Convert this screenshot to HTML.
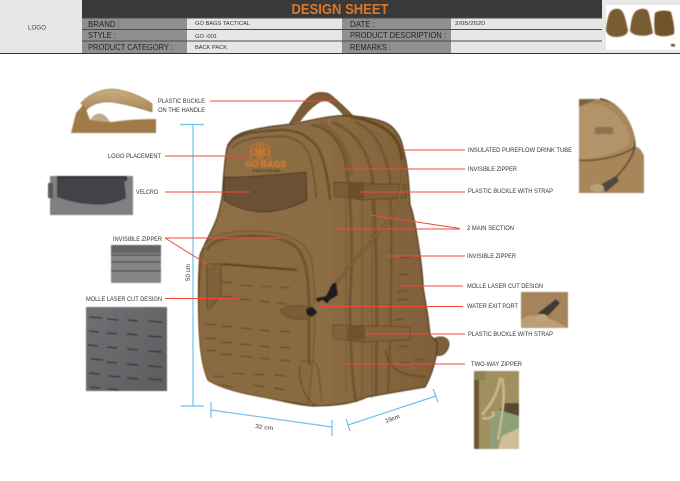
<!DOCTYPE html>
<html><head><meta charset="utf-8"><style>
html,body{margin:0;padding:0;background:#fff}
svg{display:block}
text{font-family:"Liberation Sans",sans-serif}
.l{font-size:6.2px;fill:#333}
.h{font-size:8.2px;fill:#222}
.s{font-size:5.8px;fill:#333}
.v{font-size:6px;fill:#333}
</style></head><body>
<svg width="680" height="481" viewBox="0 0 680 481" xmlns="http://www.w3.org/2000/svg">
<defs>
<linearGradient id="g" x1="0" x2="1" y1="0" y2="0"><stop offset="0" stop-color="#8f6f45"/><stop offset=".55" stop-color="#8c6c43"/><stop offset="1" stop-color="#7f603a"/></linearGradient>
<linearGradient id="hg" x1="0" x2="0" y1="0" y2="1"><stop offset="0" stop-color="#c9ad80"/><stop offset="1" stop-color="#a98758"/></linearGradient>
<linearGradient id="dg" x1="0" x2="1" y1="0" y2="1"><stop offset="0" stop-color="#717174"/><stop offset="1" stop-color="#5d5d60"/></linearGradient>
<filter id="b" x="-5%" y="-5%" width="110%" height="110%"><feGaussianBlur stdDeviation=".55"/></filter>
</defs>
<rect width="680" height="481" fill="#fff"/>
<!-- header -->
<rect x="0" y="0" width="82" height="53" fill="#e6e6e5"/>
<rect x="82" y="0" width="520" height="18" fill="#3a3939"/>
<rect x="82" y="18" width="105" height="35" fill="#8f8f8e"/>
<rect x="187" y="18" width="155" height="35" fill="#e6e6e5"/>
<rect x="342" y="18" width="109" height="35" fill="#8f8f8e"/>
<rect x="451" y="18" width="151" height="35" fill="#e6e6e5"/>
<path d="M82 18H602M82 29.500H602M82 41H602" stroke="#4a4a4a" stroke-width="1"/>
<rect x="0" y="53" width="680" height="1" fill="#333"/>
<rect x="602" y="0" width="78" height="53" fill="#e8e8e7"/>
<rect x="606" y="5" width="74" height="45" fill="#fff"/>
<text x="28" y="29.500" font-size="6.500" fill="#444" textLength="18" lengthAdjust="spacingAndGlyphs">LOGO</text>
<text x="291.500" y="14" font-size="15" font-weight="bold" fill="#d9782b" textLength="97" lengthAdjust="spacingAndGlyphs">DESIGN SHEET</text>
<text class="h" x="88" y="27" textLength="32" lengthAdjust="spacingAndGlyphs">BRAND :</text>
<text class="h" x="88" y="38" textLength="28" lengthAdjust="spacingAndGlyphs">STYLE :</text>
<text class="h" x="88" y="50" textLength="85" lengthAdjust="spacingAndGlyphs">PRODUCT CATEGORY :</text>
<text class="h" x="350" y="27" textLength="25" lengthAdjust="spacingAndGlyphs">DATE :</text>
<text class="h" x="350" y="38" textLength="96" lengthAdjust="spacingAndGlyphs">PRODUCT DESCRIPTION :</text>
<text class="h" x="350" y="50" textLength="41" lengthAdjust="spacingAndGlyphs">REMARKS :</text>
<text class="s" x="195" y="25" textLength="55" lengthAdjust="spacingAndGlyphs">GO BAGS TACTICAL</text>
<text class="s" x="195" y="38" textLength="22" lengthAdjust="spacingAndGlyphs">GO -001</text>
<text class="s" x="195" y="49" textLength="32" lengthAdjust="spacingAndGlyphs">BACK PACK</text>
<text class="s" x="455" y="25" textLength="30" lengthAdjust="spacingAndGlyphs">2/05/2020</text>
<!-- thumbnail bags -->
<g filter="url(#b)">
<path d="M606 29C607 22 608 14 611 11C614 8 620 8 622 11C625 15 626 22 628 30C628 35 622 37 616 37C610 37 606 34 606 29Z" fill="#7a5c32"/>
<path d="M630 31C631 22 632 14 636 11C640 8 646 8 648 11C650 16 651 24 653 33C648 37 634 37 630 31Z" fill="#7a5c32"/>
<path d="M655 13C658 10 668 10 671 12C673 20 675 28 674 34C668 37 658 37 655 34C654 28 654 20 655 13Z" fill="#6f5229"/>
<rect x="671" y="44" width="4" height="2.500" fill="#6a4d28"/>
</g>
<!-- backpack -->
<g filter="url(#b)">
<path d="M290 123C298 110 306 96 316 93C322 92 328 92 332 96C340 103 348 110 353 116L346 118C340 110 332 102 325 100C318 101 308 110 300 121Z" fill="#7d5d36" stroke="#50381a" stroke-width=".8"/>
<!-- side strap flap -->
<path d="M430 342C434 337 442 335 447 339C451 343 449 349 444 354C438 358 432 354 430 348Z" fill="#7d5f38" stroke="#503a1c" stroke-width=".7"/>
<path d="M227 148C232 133 246 129 292 124C310 121 332 114 353 116C375 118 388 122 393 128C400 135 402 142 403 148C408 165 409 185 410 205C414 215 417 235 420 255C422 270 423 278 423 287L428 317L430 335L437 342C438 355 432 375 425 387L367 397C355 403 335 406 313 406C295 405 280 400 263 397C240 393 220 388 208 380C203 368 201 355 200 343C198 320 198 275 200 255C205 242 213 230 217 218C221 205 223 195 223 185C224 170 225 158 227 148Z" fill="url(#g)" stroke="#4d3617" stroke-width="1.200"/>
<!-- top front pocket arcs -->
<path d="M228 146C234 135 248 131 285 130C302 131 314 140 320 152C326 168 329 185 330 200" fill="none" stroke="#5f4623" stroke-width="2.500" opacity=".75"/>
<path d="M232 148C240 139 255 137 282 136C296 137 306 145 310 157C313 170 315 180 316 198" fill="none" stroke="#674c27" stroke-width="2" opacity=".65"/>
<!-- velcro -->
<path d="M224 177C240 178 288 174 306 172L307 200C296 206 278 212 262 212C246 211 232 206 224 200Z" fill="#6a5136" stroke="#513b1f" stroke-width="1"/>
<!-- vertical panels -->
<path d="M312 125C328 128 340 140 345 160C350 190 354 240 350 300C350 340 352 380 356 402" fill="none" stroke="#5b4321" stroke-width="3" opacity=".5"/>
<path d="M332 122C352 130 366 145 372 175C376 220 378 300 376 396" fill="none" stroke="#5b4321" stroke-width="3" opacity=".5"/>
<path d="M355 122C375 130 385 150 390 178C392 230 392 300 388 392" fill="none" stroke="#5b4321" stroke-width="2.500" opacity=".45"/>
<path d="M320 122C338 134 348 150 352 176" fill="none" stroke="#6d5029" stroke-width="5" opacity=".4"/>
<path d="M346 200V395M362 200V398M372 200V398" stroke="#6a4e28" stroke-width="1.500" opacity=".45"/>
<!-- lower front pocket -->
<path d="M204 246C210 236 222 232 245 231C265 231 285 232 296 240C306 245 312 255 313 270C316 300 316 345 308 404C290 403 275 399 263 397C240 393 220 388 208 380C203 368 201 355 200 343C198 320 198 275 204 246Z" fill="#8a6a40" stroke="#6a4e28" stroke-width=".8"/>
<path d="M207 250C212 240 225 237 250 236C275 236 292 240 300 252C306 262 308 275 309 300L309 365" fill="none" stroke="#5a4120" stroke-width="3" opacity=".55"/>
<path d="M222 264L297 270" stroke="#5f4522" stroke-width="2.200"/>
<path d="M207 264h14v30l-10 14h-4z" fill="#80603a" stroke="#5a4120" stroke-width=".8"/>
<!-- molle slits -->
<g stroke="#5f4524" stroke-width="1.300" opacity=".8" fill="none">
<path d="M222 282l11 1M241 285l11 1M261 286l10 1M280 287l10 1"/>
<path d="M221 296l11 1M240 299l11 1M259 301l11 1M277 303l10 1"/>
<path d="M205 324l11 1M221 326l11 1M241 328l11 1M260 330l10 1M280 331l10 1"/>
<path d="M205 338l11 1M221 342l11 1M240 344l11 1M260 346l10 1M280 347l10 1"/>
<path d="M206 350l11 1M221 354l11 1M241 356l11 1M260 358l10 1M280 360l10 1"/>
<path d="M213 376l11 1M233 373l11 1M253 374l11 1M274 375l11 1"/>
<path d="M222 385l11 2M253 385l11 2M274 388l11 2"/>
<path d="M400 258l10-1M398 275l11-1M396 292l11-1M398 300l11-1M394 320l11-1M398 347l10-1M400 363l10-1M414 360l10-1"/>
</g>
<path d="M300 365C298 380 304 398 315 405" fill="none" stroke="#6a4e28" stroke-width="1.200"/>
<path d="M300 362C308 360 316 360 318 368L322 402" fill="none" stroke="#6a4e28" stroke-width="1"/>
<path d="M385 350C390 370 400 375 425 377" fill="none" stroke="#5f4522" stroke-width="2" opacity=".6"/>
<!-- straps -->
<path d="M334 182L380 184L406 184V198L362 200L334 196Z" fill="#7c5d36" stroke="#5a4120" stroke-width=".7"/>
<rect x="348" y="182" width="16" height="17" fill="#6b4f2b"/>
<path d="M333 325L410 327L410 340L360 342L333 338Z" fill="#83643b" stroke="#5a4120" stroke-width=".7"/>
<rect x="347" y="325" width="18" height="15" fill="#6f522d"/>
<!-- tube -->
<path d="M335 285C350 265 368 245 385 225C398 210 404 190 402 160C400 140 392 125 350 116" fill="none" stroke="#64491f" stroke-width="3"/>
<path d="M335 285C350 265 368 245 385 225C398 210 404 190 402 160" fill="none" stroke="#8d7048" stroke-width="1.500"/>
<path d="M280 311C285 304 300 304 312 308L310 318C298 322 284 318 280 311Z" fill="#7a5c34" stroke="#5a4120" stroke-width=".6"/>
<path d="M316 298L326 296L332 284L336 282L338 295L330 300L327 304L318 303Z" fill="#1d1c1b"/>
<path d="M306 309L314 306L318 312L312 317L307 315Z" fill="#1d1c1b"/>
<path d="M312 306L322 300L328 304L318 313Z" fill="#8f7048"/>
<!-- logo -->
<g fill="none" stroke="#d97a24" stroke-width=".9">
<path d="M260 142L270 147V158L260 163L250 158V147Z" stroke-dasharray="2 1"/>
<circle cx="260" cy="148" r="3.500"/><circle cx="254" cy="152" r="3"/><circle cx="266" cy="152" r="3"/><circle cx="260" cy="157" r="3"/>
<path d="M254 152H266M260 146V158" stroke-width="1.400"/>
</g>
<text x="245" y="167" font-size="8" font-weight="bold" fill="#e07f22" textLength="41" lengthAdjust="spacingAndGlyphs">GO BAGS</text>
<text x="252" y="172" font-size="3.800" font-weight="bold" fill="#3c2a15" textLength="30" lengthAdjust="spacingAndGlyphs">TACTICAL</text>
</g>
<!-- dimension lines -->
<g stroke="#6ec2ee" fill="none" stroke-width="1.200">
<path d="M180 124.500H204M193 124.500V406M181 406H204"/>
<path d="M211 402V418M211 410L332 427M332 420V436"/>
<path d="M346 419L350 431M348 425L436 396M433 389L438 402"/>
</g>
<text class="v" x="255" y="428" transform="rotate(7 255 428)" textLength="18" lengthAdjust="spacingAndGlyphs">32 cm</text>
<text class="v" x="386" y="423" transform="rotate(-20 386 423)" textLength="15" lengthAdjust="spacingAndGlyphs">19cm</text>
<text class="v" transform="translate(190 281) rotate(-90)" textLength="17" lengthAdjust="spacingAndGlyphs">50 cm</text>
<!-- red leader lines -->
<g stroke="#ef4a3c" stroke-width="1" fill="none">
<path d="M210 101H335"/>
<path d="M165 156H248"/>
<path d="M165 192H250"/>
<path d="M165 238H283M165 238L210 266"/>
<path d="M165 298.500H237"/>
<path d="M403 150H465"/>
<path d="M343 169H465"/>
<path d="M360 192H465"/>
<path d="M370 215L460 228.500M336 229H460"/>
<path d="M387 256H465"/>
<path d="M400 286H463"/>
<path d="M320 306.500H463"/>
<path d="M365 334H465"/>
<path d="M343 364H465"/>
</g>
<!-- labels -->
<text class="l" x="158" y="103" textLength="47" lengthAdjust="spacingAndGlyphs">PLASTIC BUCKLE</text>
<text class="l" x="158" y="112" textLength="47" lengthAdjust="spacingAndGlyphs">ON THE HANDLE</text>
<text class="l" x="108" y="158" textLength="53" lengthAdjust="spacingAndGlyphs">LOGO PLACEMENT</text>
<text class="l" x="136" y="194" textLength="22" lengthAdjust="spacingAndGlyphs">VELCRO</text>
<text class="l" x="113" y="241" textLength="49" lengthAdjust="spacingAndGlyphs">INVISIBLE ZIPPER</text>
<text class="l" x="86" y="301" textLength="76" lengthAdjust="spacingAndGlyphs">MOLLE LASER CUT DESIGN</text>
<text class="l" x="468" y="152" textLength="104" lengthAdjust="spacingAndGlyphs">INSULATED PUREFLOW  DRINK TUBE</text>
<text class="l" x="468" y="171" textLength="49" lengthAdjust="spacingAndGlyphs">INVISIBLE ZIPPER</text>
<text class="l" x="468" y="193" textLength="85" lengthAdjust="spacingAndGlyphs">PLASTIC BUCKLE WITH STRAP</text>
<text class="l" x="467" y="230" textLength="47" lengthAdjust="spacingAndGlyphs">2 MAIN SECTION</text>
<text class="l" x="467" y="258" textLength="49" lengthAdjust="spacingAndGlyphs">INVISIBLE ZIPPER</text>
<text class="l" x="467" y="288" textLength="76" lengthAdjust="spacingAndGlyphs">MOLLE LASER CUT DESIGN</text>
<text class="l" x="467" y="308" textLength="51" lengthAdjust="spacingAndGlyphs">WATER EXIT PORT</text>
<text class="l" x="468" y="336" textLength="85" lengthAdjust="spacingAndGlyphs">PLASTIC BUCKLE WITH STRAP</text>
<text class="l" x="471" y="366" textLength="51" lengthAdjust="spacingAndGlyphs">TWO-WAY ZIPPER</text>
<!-- photos -->
<g filter="url(#b)">
<!-- handle photo -->
<path d="M71 133L76 113L84 104L90 120L112 122C125 120 140 119 156 119V133Z" fill="#a07a4a"/>
<path d="M90 120C95 112 103 110 110 122Z" fill="#c4ab85"/>
<path d="M81 103C90 93 105 87 120 90C134 93 146 99 152 104L152 112C140 108 125 104 112 102C100 101 92 104 86 110Z" fill="url(#hg)" stroke="#7f6037" stroke-width=".6"/>
<!-- velcro photo -->
<rect x="50" y="176" width="83" height="39" fill="#808082"/>
<rect x="57" y="176" width="70" height="5" fill="#333336"/>
<path d="M57 178H124L126 198C110 207 85 207 57 197Z" fill="#434347"/>
<rect x="48" y="183" width="5" height="15" fill="#5a5a5c"/>
<!-- invisible zipper photo -->
<rect x="111" y="245" width="50" height="38" fill="#858587"/>
<rect x="111" y="245" width="50" height="8" fill="#656567"/>
<path d="M111 255H161M111 262H161M111 271H161" stroke="#3b3b3d" stroke-width="1"/>
<!-- molle photo -->
<rect x="86" y="307" width="81" height="84" fill="url(#dg)"/>
<g stroke="#2d2d30" stroke-width="1.300" fill="none">
<path d="M89 317l13 1M107 319l11 1M127 320l11 1M148 321l14 1"/>
<path d="M89 331l10 1M107 333l10 1M127 334l11 1M148 336l14 1"/>
<path d="M88 345l10 1M107 347l10 1M127 349l11 1M148 351l14 1"/>
<path d="M91 359l12 1M107 362l10 1M127 364l11 1M148 366l14 1"/>
<path d="M89 373l11 1M109 376l11 1M127 378l11 1M148 379l14 1"/>
<path d="M90 387l10 1M108 389l11 1"/>
</g>
<!-- right top photo -->
<rect x="579" y="99" width="65" height="94" fill="#a8865a"/>
<path d="M579 105C600 100 620 110 630 135L628 146C610 156 595 158 579 160Z" fill="#b3936a"/>
<path d="M579 160C600 162 625 155 636 146" fill="none" stroke="#6b4f2d" stroke-width="1.500"/>
<path d="M600 99C618 101 631 115 635 130C638 145 632 158 624 168C618 175 614 180 610 184" fill="none" stroke="#6d5230" stroke-width="2"/>
<path d="M602 98H645V157L642 152C640 148 638 147 636 147C636 130 625 104 602 98Z" fill="#fff"/>
<rect x="595" y="127" width="18" height="7" fill="#8f7350"/>
<path d="M600 185L616 176L619 181L606 192Z" fill="#4e483e"/>
<ellipse cx="597" cy="188" rx="7" ry="4" fill="#b8a27c"/>
<path d="M579 99h18l-18 8z" fill="#7e6440"/>
<!-- water exit photo -->
<rect x="521" y="292" width="47" height="36" fill="#a5845b"/>
<path d="M521 320C530 312 545 314 568 328H521Z" fill="#bb9f76"/>
<path d="M538 313L556 299L560 303L545 319Z" fill="#3e3a33"/>
<ellipse cx="542" cy="318" rx="6" ry="4" fill="#c0a67e"/>
<!-- zipper photo -->
<rect x="474" y="371" width="45" height="78" fill="#a09060"/>
<path d="M474 371h5v78h-5z" fill="#6e5730"/>
<path d="M490 412L519 406V449H490Z" fill="#8f9f79"/>
<path d="M502 436L519 428V449H498Z" fill="#d2be96"/>
<path d="M499 410L519 416V403H505Z" fill="#5a4a30"/>
<path d="M500 378C498 395 490 405 482 415M502 378C506 395 502 415 498 440M492 412C498 415 488 420 482 418" fill="none" stroke="#cdb78a" stroke-width="2.500"/>
<rect x="474" y="371" width="11" height="9" fill="#8f8056"/>
</g>
</svg>
</body></html>
